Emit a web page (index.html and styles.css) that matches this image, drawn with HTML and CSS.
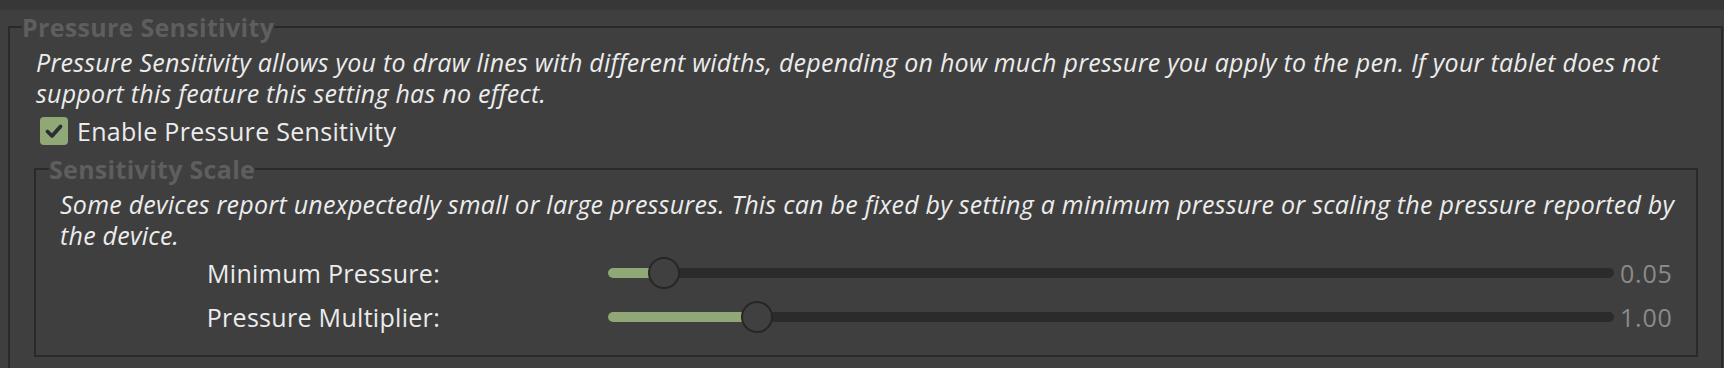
FILE: index.html
```html
<!DOCTYPE html>
<html lang="en">
<head>
<meta charset="utf-8">
<title>Pressure Sensitivity</title>
<link rel="stylesheet" href="styles.css">
</head>
<body>
<div class="strip"></div>
<fieldset class="group outer">
  <legend class="group-title">Pressure Sensitivity</legend>
  <p class="desc">Pressure Sensitivity allows you to draw lines with different widths, depending on how much pressure you apply to the pen. If your tablet does not support this feature this setting has no effect.</p>
  <label class="check">
    <span class="check-box">
      <svg viewBox="0 0 28 28" width="28" height="28" aria-hidden="true">
        <path d="M7.5 14.5 L12 19 L20.5 9.5" fill="none" stroke="#2c2f36" stroke-width="3.8" stroke-linecap="round" stroke-linejoin="round"/>
      </svg>
    </span>
    <span class="check-label">Enable Pressure Sensitivity</span>
  </label>
  <fieldset class="group inner">
    <legend class="group-title">Sensitivity Scale</legend>
    <p class="desc">Some devices report unexpectedly small or large pressures. This can be fixed by setting a minimum pressure or scaling the pressure reported by the device.</p>
    <div class="rows">
      <span class="row-label">Minimum Pressure:</span>
      <div class="slider">
        <div class="track"><div class="fill" style="width:5.58%"></div></div>
        <div class="handle" style="left:5.58%"></div>
      </div>
      <span class="value">0.05</span>

      <span class="row-label">Pressure Multiplier:</span>
      <div class="slider">
        <div class="track"><div class="fill" style="width:14.84%"></div></div>
        <div class="handle" style="left:14.84%"></div>
      </div>
      <span class="value">1.00</span>
    </div>
  </fieldset>
</fieldset>
</body>
</html>
```

FILE: styles.css
```css
html, body {
  margin: 0;
  padding: 0;
}
body {
  background: #3f3f3f;
  color: #ececec;
  font-family: "Open Sans", "Noto Sans", sans-serif;
  font-size: 25px;
  letter-spacing: 0.3px;
  width: 1724px;
  height: 368px;
  overflow: hidden;
}
.strip {
  height: 10px;
  background: #373737;
}
.group {
  border: 2px solid #2a2a2a;
  margin: 0;
  padding: 0;
  min-width: 0;
}
.outer {
  margin: 2px 1px 0 8px;
  padding: 0 0 20px 0;
}
.group-title {
  font-weight: 700;
  color: #5e5e5e;
  font-size: 25px;
  line-height: 30px;
  padding: 0;
  margin-left: 12px;
}
.inner .group-title {
  margin-left: 13px;
}
.desc {
  margin: 0;
  font-style: italic;
  letter-spacing: 0.25px;
  line-height: 31px;
  padding: 5px 26px 0 26px;
}
.check {
  display: flex;
  align-items: center;
  gap: 9px;
  margin: 7px 0 0 30px;
  height: 30px;
}
.check-box {
  width: 28px;
  height: 28px;
  border-radius: 4px;
  background: #8fa876;
  display: flex;
}
.inner {
  margin: 8px 23px 0 24px;
  padding: 0 0 21px 0;
}
.inner .desc {
  padding: 5px 10px 0 24px;
}
.rows {
  display: grid;
  grid-template-columns: 404px 1fr 52px;
  column-gap: 6px;
  row-gap: 10px;
  align-items: center;
  padding: 5px 24px 0 0;
}
.row-label {
  text-align: right;
}
.value {
  color: #8a8a8a;
  letter-spacing: 0.8px;
}
.slider {
  position: relative;
  margin-left: 162px;
  height: 32px;
  display: flex;
  align-items: center;
}
.track {
  flex: 1;
  height: 10px;
  border-radius: 5px;
  background: #2b2b2b;
  overflow: hidden;
}
.fill {
  height: 100%;
  background: #8fa876;
}
.handle {
  position: absolute;
  top: 0;
  width: 28px;
  height: 28px;
  margin-left: -16px;
  border-radius: 50%;
  background: #404040;
  border: 2px solid #262626;
}
```
